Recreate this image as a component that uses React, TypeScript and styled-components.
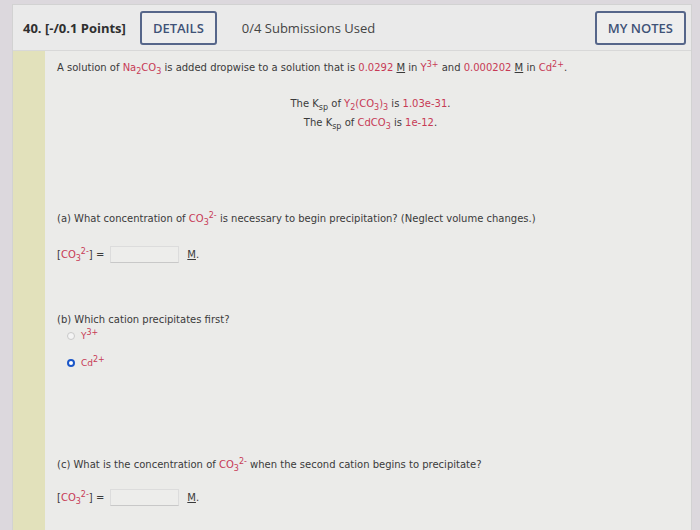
import React from 'react';
import styled, { createGlobalStyle } from 'styled-components';

const Global = createGlobalStyle`
  html, body {
    margin: 0;
    padding: 0;
    background: #dcd8dd;
  }
  body {
    font-family: "DejaVu Sans", Verdana, sans-serif;
    color: #3a3a3a;
  }
`;

const Page = styled.div`
  width: 700px;
  height: 530px;
  overflow: hidden;
  padding: 4px 8px 0 12px;
  box-sizing: border-box;
`;

const Panel = styled.div`
  width: 680px;
  height: 526px;
  background: #ebebe9;
  border: 1px solid #d2d2d2;
  border-bottom: none;
  box-sizing: border-box;
`;

const Header = styled.div`
  display: flex;
  align-items: center;
  height: 45px;
  padding: 0 5px 0 10px;
  background: #eaeaea;
  border-bottom: 1px solid #d8d8d8;
  font-family: "Open Sans", "Noto Sans", sans-serif;
`;

const Points = styled.span`
  font-weight: 700;
  font-size: 13px;
  color: #2f2f2f;
  margin-right: 14px;
`;

const OutlineButton = styled.div`
  border: 2px solid #56668a;
  border-radius: 3px;
  color: #3f5277;
  font-size: 13px;
  font-weight: 600;
  padding: 6px 11px;
  background: #eeeeee;
`;

const Used = styled.span`
  font-size: 13px;
  color: #444;
  margin-left: 25px;
`;

const Spacer = styled.div`
  flex: 1;
`;

const Body = styled.div`
  display: flex;
  height: 480px;
`;

const Strip = styled.div`
  width: 32px;
  background: #e2e1bb;
  flex: none;
`;

const Content = styled.div`
  flex: 1;
  padding: 10px 12px 0 12px;
  font-size: 10px;
  line-height: 14px;
`;

const Red = styled.span`
  color: #c73a55;
`;

const Under = styled.span`
  text-decoration: underline;
`;

const Sub = styled.sub`
  font-size: 8px;
  line-height: 0;
`;

const Sup = styled.sup`
  font-size: 8px;
  line-height: 0;
`;

const Center = styled.div`
  text-align: center;
  margin: 19px 0 0 5px;
  line-height: 19px;
`;

const Part = styled.div<{ $top: number }>`
  margin-top: ${p => p.$top}px;
`;

const AnswerRow = styled.div<{ $top: number }>`
  display: flex;
  align-items: center;
  height: 17px;
  margin-top: ${p => p.$top}px;
`;

const Input = styled.div`
  width: 67px;
  height: 15px;
  border: 1px solid #dcdcdc;
  border-bottom-color: #c8c8c8;
  background: #ededeb;
  margin: 0 8px 0 6px;
`;

const RadioRow = styled.div<{ $top: number }>`
  display: flex;
  align-items: center;
  height: 14px;
  margin: ${p => p.$top}px 0 0 10px;
`;

const Radio = styled.span<{ $on?: boolean }>`
  width: 8px;
  height: 8px;
  border-radius: 50%;
  box-sizing: border-box;
  border: ${p => (p.$on ? '2.5px solid #1a56c8' : '1px solid #c9c9c9')};
  background: ${p => (p.$on ? '#fff' : '#f4f4f4')};
  margin-right: 6px;
`;

const Small = styled.span`
  font-size: 9px;
`;

const CO3 = () => (
  <Red>
    CO<Sub>3</Sub>
    <Sup>2-</Sup>
  </Red>
);

export default function App() {
  return (
    <Page>
      <Global />
      <Panel>
        <Header>
          <Points>40. [-/0.1 Points]</Points>
          <OutlineButton>DETAILS</OutlineButton>
          <Used>0/4 Submissions Used</Used>
          <Spacer />
          <OutlineButton>MY NOTES</OutlineButton>
        </Header>
        <Body>
          <Strip />
          <Content>
            <div>
              A solution of <Red>Na<Sub>2</Sub>CO<Sub>3</Sub></Red> is added dropwise to a solution that is{' '}
              <Red>0.0292</Red> <Under>M</Under> in <Red>Y<Sup>3+</Sup></Red> and{' '}
              <Red>0.000202</Red> <Under>M</Under> in <Red>Cd<Sup>2+</Sup></Red>.
            </div>
            <Center>
              <div>
                The K<Sub>sp</Sub> of <Red>Y<Sub>2</Sub>(CO<Sub>3</Sub>)<Sub>3</Sub></Red> is <Red>1.03e-31</Red>.
              </div>
              <div>
                The K<Sub>sp</Sub> of <Red>CdCO<Sub>3</Sub></Red> is <Red>1e-12</Red>.
              </div>
            </Center>
            <Part $top={80}>
              (a) What concentration of <CO3 /> is necessary to begin precipitation? (Neglect volume changes.)
            </Part>
            <AnswerRow $top={20}>
              <span>[<CO3 />] =</span>
              <Input />
              <Under>M</Under>.
            </AnswerRow>
            <Part $top={50}>(b) Which cation precipitates first?</Part>
            <RadioRow $top={2}>
              <Radio />
              <Red><Small>Y<Sup>3+</Sup></Small></Red>
            </RadioRow>
            <RadioRow $top={13}>
              <Radio $on />
              <Red><Small>Cd<Sup>2+</Sup></Small></Red>
            </RadioRow>
            <Part $top={88}>
              (c) What is the concentration of <CO3 /> when the second cation begins to precipitate?
            </Part>
            <AnswerRow $top={17}>
              <span>[<CO3 />] =</span>
              <Input />
              <Under>M</Under>.
            </AnswerRow>
          </Content>
        </Body>
      </Panel>
    </Page>
  );
}
